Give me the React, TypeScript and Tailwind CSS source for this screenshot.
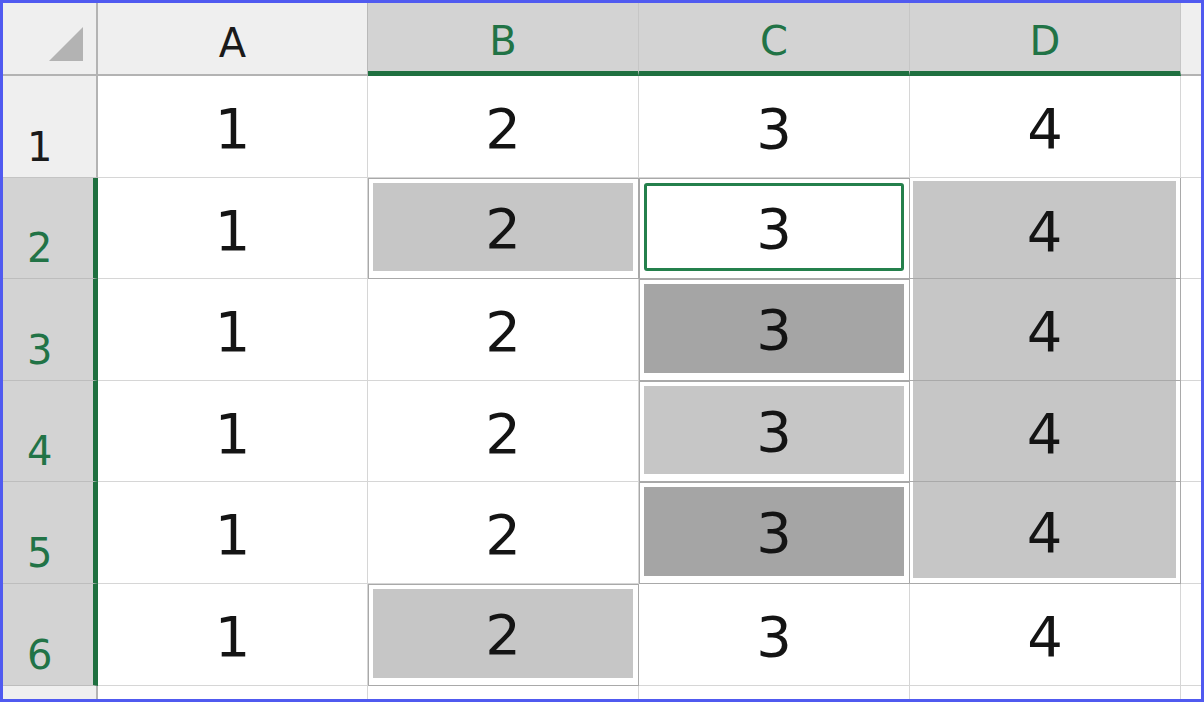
import React from "react";

type Kind = "plain" | "gray" | "dark" | "active" | "dcol";

const COLS = ["A", "B", "C", "D"];

function ValueText({ v }: { v: string }) {
  return <span className="text-[56px] leading-none text-[#141414]">{v}</span>;
}

function Cell({
  v,
  kind = "plain",
  first,
  last,
}: {
  v: string;
  kind?: Kind;
  first?: boolean;
  last?: boolean;
}) {
  if (kind === "plain") {
    return (
      <div className="flex items-center justify-center border-r border-b border-[#d6d6d6] bg-white pt-[5px]">
        <ValueText v={v} />
      </div>
    );
  }
  if (kind === "dcol") {
    return (
      <div
        className={
          "flex border-r border-b border-[#a9a9a9] bg-white pl-[3px] pr-[4px] " +
          (first ? "pt-[3px] " : "") +
          (last ? "pb-[5px] " : "")
        }
      >
        <div className="flex flex-1 items-center justify-center bg-[#c6c6c6] pt-[5px]">
          <ValueText v={v} />
        </div>
      </div>
    );
  }
  const fill =
    kind === "gray"
      ? "bg-[#c6c6c6]"
      : kind === "dark"
      ? "bg-[#a5a5a5]"
      : "bg-white border-[3px] border-[#24804c] rounded-[3px]";
  return (
    <div className="flex border-r border-b border-[#a9a9a9] bg-white pt-[5px] pl-[5px] pr-[5px] pb-[7px] shadow-[inset_1px_1px_0_#a9a9a9]">
      <div className={"flex flex-1 items-center justify-center pt-[3px] " + fill}>
        <ValueText v={v} />
      </div>
    </div>
  );
}

function RowHeader({ n, selected }: { n: string; selected: boolean }) {
  return (
    <div
      className={
        "flex items-end pl-[24px] pb-[10px] border-b " +
        (selected
          ? "bg-[#d3d3d3] border-r-[5px] border-r-[#1f7040] border-b-[#bdbdbd] text-[#217346]"
          : "bg-[#efefef] border-r-2 border-r-[#b3b3b3] border-b-[#c4c4c4] text-[#1a1a1a]")
      }
    >
      <span className="text-[40px] leading-none">{n}</span>
    </div>
  );
}

export default function App() {
  const rows: { n: string; cells: [string, Kind, boolean?, boolean?][] }[] = [
    { n: "1", cells: [["1", "plain"], ["2", "plain"], ["3", "plain"], ["4", "plain"]] },
    { n: "2", cells: [["1", "plain"], ["2", "gray"], ["3", "active"], ["4", "dcol", true, false]] },
    { n: "3", cells: [["1", "plain"], ["2", "plain"], ["3", "dark"], ["4", "dcol"]] },
    { n: "4", cells: [["1", "plain"], ["2", "plain"], ["3", "gray"], ["4", "dcol"]] },
    { n: "5", cells: [["1", "plain"], ["2", "plain"], ["3", "dark"], ["4", "dcol", false, true]] },
    { n: "6", cells: [["1", "plain"], ["2", "gray"], ["3", "plain"], ["4", "plain"]] },
  ];

  return (
    <div className="w-[1204px] h-[702px] border-[3px] border-[#505af0] bg-white overflow-hidden font-['DejaVu_Sans',sans-serif]">
      <div className="grid h-full grid-cols-[95px_270px_271px_271px_271px_1fr] grid-rows-[73px_102px_101px_102px_101px_102px_102px_1fr]">
        {/* corner */}
        <div className="flex items-end justify-end bg-[#efefef] border-r-2 border-b-2 border-[#b3b3b3] pr-[13px] pb-[13px]">
          <svg width="34" height="34" viewBox="0 0 34 34">
            <polygon points="34,0 34,34 0,34" fill="#b3b3b3" />
          </svg>
        </div>
        {/* column headers */}
        {COLS.map((c) => {
          const sel = c !== "A";
          return (
            <div
              key={c}
              className={
                "flex items-center justify-center pt-[8px] " +
                (sel
                  ? "bg-[#d3d3d3] border-r border-r-[#c6c6c6] border-b-[5px] border-b-[#1f7040] text-[#217346]"
                  : "bg-[#efefef] border-r border-r-[#b8b8b8] border-b-2 border-b-[#b3b3b3] text-[#1a1a1a]")
              }
            >
              <span className="text-[40px] leading-none">{c}</span>
            </div>
          );
        })}
        <div className="bg-[#efefef] border-b-2 border-[#b3b3b3]" />

        {rows.map((r) => (
          <React.Fragment key={r.n}>
            <RowHeader n={r.n} selected={r.n !== "1"} />
            {r.cells.map(([v, k, f, l], i) => (
              <Cell key={i} v={v} kind={k} first={f} last={l} />
            ))}
            <div className="bg-white border-b border-[#d6d6d6]" />
          </React.Fragment>
        ))}

        {/* partial row 7 */}
        <div className="bg-[#efefef] border-r-2 border-[#b3b3b3]" />
        <div className="bg-white border-r border-[#d6d6d6]" />
        <div className="bg-white border-r border-[#d6d6d6]" />
        <div className="bg-white border-r border-[#d6d6d6]" />
        <div className="bg-white border-r border-[#d6d6d6]" />
        <div className="bg-white" />
      </div>
    </div>
  );
}
